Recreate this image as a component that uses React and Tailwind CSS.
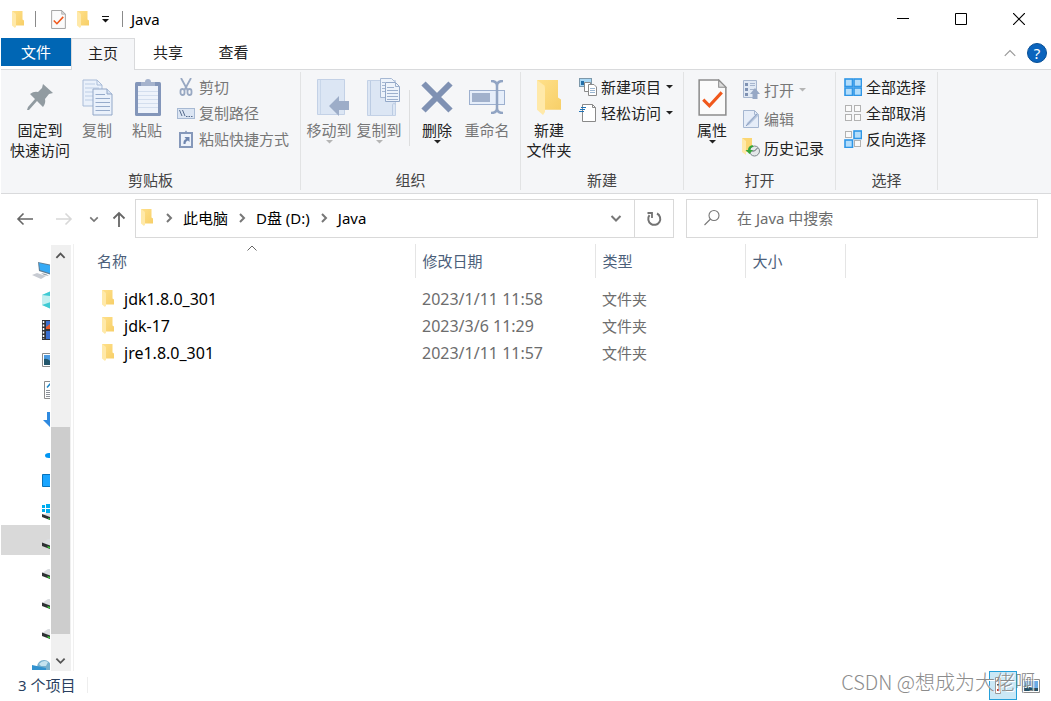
import React from 'react';

const files = [
    { name: 'jdk1.8.0_301', modified: '2023/1/11 11:58', type: '文件夹' },
    { name: 'jdk-17', modified: '2023/3/6 11:29', type: '文件夹' },
    { name: 'jre1.8.0_301', modified: '2023/1/11 11:57', type: '文件夹' },
];

const Folder = ({ className }) => (
    <svg viewBox="0 0 24 34" className={className} preserveAspectRatio="none" aria-hidden="true">
        <defs>
            <linearGradient id="folderBack" x1="0" y1="0" x2="1" y2="1">
                <stop offset="0%" stopColor="#ffe08a" />
                <stop offset="100%" stopColor="#f7cf68" />
            </linearGradient>
        </defs>
        <path d="M0 0H21V17L24 19V29H5Z" fill="url(#folderBack)" />
        <path d="M0 0L7 5Q8 6 8 8V31L6 34L0 29Z" fill="#ffe9a9" />
    </svg>
);

const CheckDoc = ({ className }) => (
    <svg viewBox="0 0 28 36" className={className} aria-hidden="true">
        <path d="M1 1H20L27 8V35H1Z" fill="#fbfbfb" stroke="#8d8d8d" strokeWidth="1.5" />
        <path d="M20 1V8H27Z" fill="#dcdcdc" stroke="#8d8d8d" strokeWidth="1" />
        <path d="M5 20L11 26L23 13" fill="none" stroke="#f0581c" strokeWidth="3" />
    </svg>
);

const Caret = ({ className }) => (
    <svg width="7" height="4" viewBox="0 0 7 4" className={className} aria-hidden="true">
        <path d="M0 0H7L3.500 3.500Z" fill="currentColor" />
    </svg>
);

const Chevron = ({ d, size = 12, stroke = 2, className }) => (
    <svg width={size} height={size} viewBox="0 0 12 12" className={className} aria-hidden="true">
        <path d={d} fill="none" stroke="currentColor" strokeWidth={stroke} />
    </svg>
);

const UP = 'M1.5 8.5L6 4L10.5 8.5';
const DOWN = 'M1.5 4L6 8.5L10.5 4';
const RIGHT = 'M4 2L8 6L4 10';

const PinIcon = () => (
    <svg width="28" height="28" viewBox="0 0 28 28">
        <path d="M17 1L27 10L23 11L19 16Q20 20 17 24L11 18L3 27L1 27L2 24L9 16L4 11Q8 8 12 9L16 5Z" fill="#919ba1" />
    </svg>
);

const Pages = ({ size = 'w-[31px] h-[37px]' }) => (
    <svg viewBox="0 0 31 37" className={size}>
        <path d="M1 1H15L20 6V27H1Z" fill="#eaf1fb" stroke="#a9bcd8" />
        <path d="M15 1V6H20" fill="none" stroke="#a9bcd8" />
        <path d="M3 5H13M3 9H17M3 13H17M3 17H17M3 21H17" stroke="#bccde5" />
        <path d="M11 10H25L30 15V36H11Z" fill="#eaf1fb" stroke="#92a7c8" />
        <path d="M25 10V15H30" fill="#d6e2f3" stroke="#92a7c8" />
        <path d="M13.500 15.500H23M13.500 19.500H28M13.500 23.500H28M13.500 27.500H28M13.500 31.500H28" stroke="#96abcb" />
    </svg>
);

const ClipboardIcon = () => (
    <svg width="27" height="38" viewBox="-1 0 27 38">
        <rect x="0" y="4" width="26" height="34" rx="1.500" fill="#8396ba" />
        <rect x="3" y="8" width="20" height="27" fill="#eef3fb" />
        <path d="M3 13.500H23M3 17.500H23M3 21.500H23M3 25.500H23M3 29.500H23" stroke="#d3deee" />
        <path d="M6 8V4H10Q10 1 13 1T16 4H20V8Z" fill="#a5b3cd" />
    </svg>
);

const ScissorsIcon = () => (
    <svg width="14" height="18" viewBox="0 0 14 18" fill="none" stroke="#98a8c2" strokeWidth="1.800">
        <path d="M2 0L8.500 12M12 0L5.500 12" />
        <rect x="1.500" y="11" width="4" height="6" rx="2" />
        <rect x="8.500" y="11" width="4" height="6" rx="2" />
    </svg>
);

const PathIcon = () => (
    <svg width="18" height="11" viewBox="0 0 18 11">
        <rect x=".5" y=".5" width="17" height="10" fill="#dbe5f3" stroke="#a7b9d3" />
        <path d="M2.500 2L5 8M5.500 2L8 8M9 8.500H10.500M11.500 8.500H13M14 8.500H15.500" stroke="#566c8e" fill="none" />
    </svg>
);

const ShortcutIcon = () => (
    <svg width="14" height="18" viewBox="0 0 14 18">
        <path d="M1 3H13V17H1Z" fill="#edf2fa" stroke="#8598ba" strokeWidth="2" />
        <path d="M4 4V2H6Q7 -1 8 2H10V4Z" fill="#8598ba" />
        <path d="M4.500 14Q4 10 7 9L5.500 7H10.500V12L9 10.500Q6.500 11 6.500 14Z" fill="#6f86af" />
    </svg>
);

const MoveIcon = () => (
    <svg width="40" height="38" viewBox="-8 0 40 38">
        <path d="M.5 1.500H27.500V36.500H.5Z" fill="#dce6f4" stroke="#c3d1e6" />
        <path d="M3.500 2V36" stroke="#c9d7ea" />
        <path d="M12 28L22 18V23H32V32H22V38Z" fill="#9dadc8" />
    </svg>
);

const CopyToIcon = () => (
    <svg width="41" height="39" viewBox="-8 0 41 39">
        <path d="M.5 2.500H28.500V37.500H.5Z" fill="#dce6f4" stroke="#c3d1e6" />
        <path d="M3.500 3V37M25.500 37V27Q27 23 28.500 27" stroke="#bccce3" fill="none" />
        <path d="M13.500 .5H24.500L27.500 3.500V19.500H13.500Z" fill="#edf3fb" stroke="#a6b8d3" />
        <path d="M15 4.500H18M15 7.500H18M15 10.500H18M15 13.500H18" stroke="#a6b8d3" />
        <path d="M18.500 4.500H28.500L32.500 8.500V23.500H18.500Z" fill="#edf3fb" stroke="#93a8c8" />
        <path d="M28.500 4.500V8.500H32M20 9.500H27M20 12.500H31M20 15.500H31M20 18.500H31M20 21.500H31" stroke="#9db0cd" fill="none" />
    </svg>
);

const DeleteIcon = () => (
    <svg width="32" height="32" viewBox="0 0 32 32">
        <path d="M2.500 2.500L29.500 29.500M29.500 2.500L2.500 29.500" stroke="#7f91b3" strokeWidth="6" />
    </svg>
);

const RenameIcon = () => (
    <svg width="36" height="34" viewBox="0 0 36 34">
        <rect x=".5" y="10.500" width="35" height="14" fill="#e6eefa" stroke="#9db0cf" />
        <rect x="3" y="13" width="18" height="9" fill="#a1b1cc" />
        <path d="M22 1Q28 1 28 6Q28 1 34 1M28 4V30M22 33Q28 33 28 28Q28 33 34 33" fill="none" stroke="#91a4c3" strokeWidth="2.500" />
    </svg>
);

const NewItemIcon = () => (
    <svg width="18" height="18" viewBox="0 0 18 18">
        <rect x=".5" y=".5" width="12" height="8" fill="#a9d8f5" stroke="#7d98aa" />
        <rect x="2" y="3" width="3" height="4" fill="#246fa8" />
        <path d="M5.500 4.500H11.500V13.500H5.500Z" fill="#fff" stroke="#8b8b8b" />
        <path d="M9.500 6.500H15L17.500 9V17.500H9.500Z" fill="#fff" stroke="#8b8b8b" />
        <path d="M11 10.500H16M11 12.500H16M11 14.500H16" stroke="#9bb6d1" />
    </svg>
);

const EasyAccessIcon = () => (
    <svg width="18" height="18" viewBox="0 0 18 18">
        <path d="M3.500 .5H13.500L16.500 3.500V17.500H3.500Z" fill="#fff" stroke="#898989" />
        <path d="M13.500 .5V3.500H16.500" fill="none" stroke="#898989" />
        <path d="M2 3.500H7M1 5.500H6M0 7.500H5" stroke="#1f73b7" />
    </svg>
);

const OpenIcon = () => (
    <svg width="17" height="19" viewBox="0 0 17 19">
        <path d="M.5 .5H13.500V17.500H.5Z" fill="#e1e9f4" stroke="#a7b6ce" />
        <path d="M2 3H5V6H2ZM2 8H5V11H2ZM2 13H5V16H2Z" fill="#7f92b3" />
        <path d="M7 3.500H12M7 5.500H12M7 9.500H12" stroke="#a7b6ce" />
        <path d="M12 8L17 14H14.500V19H9.500V14H7Z" fill="#97a8c5" />
    </svg>
);

const EditIcon = () => (
    <svg width="17" height="18" viewBox="0 0 17 18">
        <path d="M.5 .5H11.500L15.500 4.500V17.500H.5Z" fill="#e6edf8" stroke="#a5b6d0" />
        <path d="M11.500 .5V4.500H15.500" fill="none" stroke="#a5b6d0" />
        <path d="M4 13L14 3L16 5L6 15L3 16Z" fill="#b8c7de" />
        <path d="M3 16L14 4" stroke="#8da1c2" />
    </svg>
);

const HistoryIcon = () => (
    <svg width="18" height="19" viewBox="0 0 18 19">
        <path d="M0 0H10V14H4Z" fill="#fbd673" />
        <path d="M0 0L4 3V17L0 14Z" fill="#ffe9a9" />
        <circle cx="12.500" cy="13" r="5" fill="#e4e8e9" stroke="#7b8589" />
        <path d="M12.500 13L15.500 10M12.500 13H10" stroke="#59636a" />
        <path d="M10.500 7Q6 8 6 12H3.500L7.500 16L11 12H8.500Q8.500 9 11.500 9Z" fill="#35a53b" />
    </svg>
);

const SelectIcon = ({ on }) => (
    <svg width="18" height="18" viewBox="0 0 18 18">
        {[[0, 0], [9, 0], [0, 9], [9, 9]].map(([x, y], i) => {
            const active = on.includes(i);
            return (
                <rect
                    key={i}
                    x={x + (active ? 1 : 1.5)}
                    y={y + (active ? 1 : 1.5)}
                    width={active ? 7.5 : 6}
                    height={active ? 7.5 : 6}
                    fill={active ? '#b3ddfb' : '#fafafa'}
                    stroke={active ? '#2f96e6' : '#b2b2b2'}
                    strokeWidth={active ? 1.6 : 1}
                />
            );
        })}
    </svg>
);

const BigButton = ({ icon, label, caret, disabled, width = 'w-[50px]' }) => (
    <button className={`${width} flex flex-col items-center shrink-0 ${disabled ? 'text-[#777]' : 'text-[#222]'}`}>
        <span className="h-[46px] flex items-center justify-center">{icon}</span>
        <span className="leading-5 whitespace-pre">{label}</span>
        {caret && <Caret className={disabled ? 'text-[#b5b5b5]' : 'text-[#222]'} />}
    </button>
);

const SmallButton = ({ icon, label, caret, disabled, height = 'h-[26px]' }) => (
    <button className={`${height} flex items-center whitespace-nowrap ${disabled ? 'text-[#777]' : 'text-[#222]'}`}>
        <span className="w-[18px] mr-1 flex justify-center">{icon}</span>
        {label}
        {caret && <Caret className={disabled ? 'ml-[5px] text-[#b5b5b5]' : 'ml-[5px] text-[#222]'} />}
    </button>
);

const Group = ({ label, width, children }) => (
    <section className={`${width} shrink-0 mt-0.5 mb-[3px] flex flex-col border-r border-[#e2e3e4]`}>
        <div className="flex-1 flex items-start">{children}</div>
        <div className="h-5 leading-5 text-center text-[#444]">{label}</div>
    </section>
);

const Ribbon = () => (
    <div className="h-[124px] shrink-0 ml-px flex bg-[#f5f6f8] border-b border-[#d9dadc] overflow-hidden">
        <Group label="剪贴板" width="w-[300px]">
            <div className="pl-[7px] pt-0.5 flex">
                <BigButton icon={<PinIcon />} label={'固定到\n快速访问'} width="w-16" />
                <BigButton icon={<Pages />} label="复制" disabled />
                <BigButton icon={<ClipboardIcon />} label="粘贴" disabled />
            </div>
            <div className="pl-[5px] pt-0.5 flex flex-col items-start">
                <SmallButton icon={<ScissorsIcon />} label="剪切" disabled />
                <SmallButton icon={<PathIcon />} label="复制路径" disabled />
                <SmallButton icon={<ShortcutIcon />} label="粘贴快捷方式" disabled />
            </div>
        </Group>
        <Group label="组织" width="w-[220px]">
            <div className="pl-[3px] pt-0.5 flex">
                <BigButton icon={<MoveIcon />} label="移动到" caret disabled />
                <BigButton icon={<CopyToIcon />} label="复制到" caret disabled />
                <div className="w-px h-14 mt-4 ml-[5px] mr-0.5 bg-[#dddedf]" />
                <BigButton icon={<DeleteIcon />} label="删除" caret />
                <BigButton icon={<RenameIcon />} label="重命名" disabled />
            </div>
        </Group>
        <Group label="新建" width="w-[163px]">
            <div className="pl-[3px] pt-0.5 flex">
                <BigButton icon={<Folder className="w-6 h-[35px]" />} label={'新建\n文件夹'} />
            </div>
            <div className="pl-[5px] pt-0.5 flex flex-col items-start">
                <SmallButton icon={<NewItemIcon />} label="新建项目" caret />
                <SmallButton icon={<EasyAccessIcon />} label="轻松访问" caret />
            </div>
        </Group>
        <Group label="打开" width="w-[152px]">
            <div className="pl-[3px] pt-0.5 flex">
                <BigButton icon={<CheckDoc className="w-[29px] h-[37px]" />} label="属性" caret />
            </div>
            <div className="pl-[5px] pt-[3px] flex flex-col items-start">
                <SmallButton icon={<OpenIcon />} label="打开" caret disabled height="h-[29px]" />
                <SmallButton icon={<EditIcon />} label="编辑" disabled height="h-[29px]" />
                <SmallButton icon={<HistoryIcon />} label="历史记录" height="h-[29px]" />
            </div>
        </Group>
        <Group label="选择" width="w-[102px]">
            <div className="pl-2 pt-0.5 flex flex-col items-start">
                <SmallButton icon={<SelectIcon on={[0, 1, 2, 3]} />} label="全部选择" />
                <SmallButton icon={<SelectIcon on={[]} />} label="全部取消" />
                <SmallButton icon={<SelectIcon on={[1, 2]} />} label="反向选择" />
            </div>
        </Group>
    </div>
);

const TitleBar = () => (
    <header className="h-[38px] shrink-0 flex items-center justify-between">
        <div className="flex items-center pl-3">
            <Folder className="w-3 h-[17px]" />
            <span className="w-px h-4 ml-[11px] mr-[15px] bg-[#8a8a8a]" />
            <button aria-label="属性"><CheckDoc className="w-[15px] h-[19px]" /></button>
            <button aria-label="新建文件夹" className="ml-[11px]"><Folder className="w-3 h-[17px]" /></button>
            <button aria-label="自定义快速访问工具栏" className="ml-[13px]">
                <svg width="7" height="7" viewBox="0 0 7 7"><path d="M0 .5H7" stroke="#111" /><path d="M0 3H7L3.500 6.500Z" fill="#111" /></svg>
            </button>
            <span className="w-px h-4 ml-[13px] mr-2 bg-[#8a8a8a]" />
            <h1>Java</h1>
        </div>
        <div className="flex h-full pr-[3px]">
            <button aria-label="最小化" className="w-[58px] flex items-center justify-center">
                <svg width="12" height="12" viewBox="0 0 12 12"><path d="M0 5.500H12" stroke="#000" /></svg>
            </button>
            <button aria-label="最大化" className="w-[58px] flex items-center justify-center">
                <svg width="12" height="12" viewBox="0 0 12 12"><path d="M.5 .5H11.500V11.500H.5Z" fill="none" stroke="#000" /></svg>
            </button>
            <button aria-label="关闭" className="w-[58px] flex items-center justify-center">
                <svg width="12" height="12" viewBox="0 0 12 12"><path d="M0 0L12 12M12 0L0 12" stroke="#000" strokeWidth="1.200" /></svg>
            </button>
        </div>
    </header>
);

const Tabs = () => (
    <nav className="h-8 shrink-0 ml-px flex items-start border-b border-[#d9dadc] text-[#222]">
        <button className="w-[70px] h-7 bg-[#0066b4] text-white">文件</button>
        <button className="w-16 h-8 pb-1 bg-[#f5f6f8] border border-b-0 border-[#d9dadc]">主页</button>
        <button className="w-[66px] h-7">共享</button>
        <button className="w-[65px] h-7">查看</button>
        <div className="ml-auto h-[30px] pr-1 flex items-center gap-2.5">
            <button aria-label="最小化功能区"><Chevron d={UP} size={14} stroke={1} className="text-[#999]" /></button>
            <button className="w-5 h-5 rounded-full bg-[#0b64bd] border border-[#084f95] text-white leading-none">?</button>
        </div>
    </nav>
);

const AddressBar = () => (
    <div className="h-[50px] shrink-0 pt-[5px] pr-[13px] flex items-start text-black">
        <div className="w-[135px] h-[39px] shrink-0 pl-4 pr-[9px] flex items-center justify-between text-[#777]">
            <button aria-label="后退">
                <svg width="18" height="14" viewBox="0 0 18 14" fill="none" stroke="#666" strokeWidth="1.600"><path d="M17 7H2M7.500 1.500L2 7L7.500 12.500" /></svg>
            </button>
            <button aria-label="前进" className="ml-5">
                <svg width="18" height="14" viewBox="0 0 18 14" fill="none" stroke="#d8d8d8" strokeWidth="1.600"><path d="M1 7H16M10.500 1.500L16 7L10.500 12.500" /></svg>
            </button>
            <button aria-label="最近位置" className="ml-4"><Chevron d={DOWN} size={10} /></button>
            <button aria-label="上移" className="ml-3">
                <svg width="14" height="16" viewBox="0 0 14 16" fill="none" stroke="#666" strokeWidth="1.800"><path d="M7 16V2M1.500 7.500L7 2L12.500 7.500" /></svg>
            </button>
        </div>
        <div className="h-[39px] flex-1 flex border border-[#d9d9d9]">
            <div className="flex-1 flex items-center pl-[5px] pb-0.5">
                <Folder className="w-3 h-[17px] mr-2.5" />
                <Chevron d={RIGHT} className="text-[#777]" />
                <button className="mx-2">此电脑</button>
                <Chevron d={RIGHT} className="text-[#777]" />
                <button className="mx-2">D盘 (D:)</button>
                <Chevron d={RIGHT} className="text-[#777]" />
                <button className="mx-2">Java</button>
                <button aria-label="上一个位置" className="ml-auto mr-3"><Chevron d={DOWN} className="text-[#777]" /></button>
            </div>
            <button aria-label="刷新" className="w-[39px] border-l border-[#d9d9d9] flex items-center justify-center">
                <svg width="16" height="16" viewBox="0 0 16 16" fill="none" stroke="#737373" strokeWidth="2">
                    <path d="M11 2.500A6 6 0 1 1 3.500 4.200" />
                    <path d="M1.500 2H6V7" strokeWidth="1.800" />
                </svg>
            </button>
        </div>
        <label className="w-[352px] h-[39px] ml-3 pl-4 pb-px flex items-center border border-[#d9d9d9]">
            <svg width="18" height="18" viewBox="0 0 18 18" fill="none" stroke="#777" strokeWidth="1.100">
                <circle cx="11" cy="6.500" r="5" />
                <path d="M7.500 10L1.500 16" />
            </svg>
            <input
                type="text"
                aria-label="搜索"
                placeholder="在 Java 中搜索"
                className="min-w-0 flex-1 ml-4 outline-none placeholder:text-[#6d6d6d]"
            />
        </label>
    </div>
);

const Drive = () => (
    <svg width="18" height="18" viewBox="0 0 18 18">
        <path d="M0 12L6 8H18V16L8 18Z" fill="#dcdee2" />
        <path d="M0 11.500L8 14.500V18L0 15Z" fill="#2d3033" />
        <path d="M5.500 15L8 16V17.500L5.500 16.500Z" fill="#34d134" />
    </svg>
);

const sideItems = [
    { label: '此电脑', root: true, icon: (
        <svg width="20" height="20" viewBox="0 0 20 20">
            <path d="M6 2L20 5V15L7 11Z" fill="#5f7d94" />
            <path d="M7 3L20 6V14L8 10Z" fill="#35aaf6" />
            <path d="M0 15L5 13L14 16L9 19Z" fill="#c7cbd2" />
            <path d="M9 13L14 14L17 16L12 15Z" fill="#9aa4ad" />
        </svg>
    ) },
    { label: '3D 对象', icon: (
        <svg width="18" height="18" viewBox="0 0 18 18">
            <path d="M0 4L9 0L18 4V14L9 18L0 14Z" fill="#c4f0f1" />
            <path d="M0 4L9 0V5ZM0 14L9 11V18Z" fill="#3fcad3" />
        </svg>
    ) },
    { label: '视频', icon: (
        <svg width="18" height="20" viewBox="0 0 18 20">
            <path d="M0 0H18V20H0Z" fill="#33343a" />
            <path d="M1.500 1V19" stroke="#fff" strokeWidth="1.500" strokeDasharray="2 1.500" />
            <path d="M4 1H18V9H4ZM4 11H18V19H4Z" fill="#3a6fd0" />
            <path d="M4 7L8 4L10 9H4Z" fill="#e75b2c" />
        </svg>
    ) },
    { label: '图片', icon: (
        <svg width="18" height="14" viewBox="0 0 18 14">
            <path d="M.5 .5H17.500V13.500H.5Z" fill="#fff" stroke="#8c8c8c" />
            <path d="M2 2H16V12H2Z" fill="#4d9be0" />
            <path d="M2 6Q6 5 9 9H16V12H2Z" fill="#23566b" />
        </svg>
    ) },
    { label: '文档', icon: (
        <svg width="18" height="18" viewBox="0 0 18 18">
            <path d="M2.500 .5H16.500V17.500H2.500Z" fill="#fff" stroke="#8c8c8c" />
            <path d="M5 6.500L8 3H13" stroke="#1c87c9" strokeWidth="1.500" fill="none" />
            <path d="M4 9.500H15M4 11.500H15M4 13.500H15M4 15.500H15" stroke="#8c9299" />
        </svg>
    ) },
    { label: '下载', icon: (
        <svg width="18" height="16" viewBox="0 0 18 16"><path d="M5 0H12V8H18L9 16L1 8H5Z" fill="#2f8ae0" /></svg>
    ) },
    { label: '音乐', icon: (
        <svg width="18" height="18" viewBox="0 0 18 18"><path d="M9 3H11V14H9Z" fill="#0095f2" /><ellipse cx="7" cy="14.500" rx="4" ry="2.500" fill="#0095f2" /></svg>
    ) },
    { label: '桌面', icon: (
        <svg width="18" height="13" viewBox="0 0 18 13"><path d="M.5 .5H17.500V12.500H.5Z" fill="#1aa5ff" stroke="#0873bb" /></svg>
    ) },
    { label: '本地磁盘 (C:)', icon: (
        <svg width="18" height="22" viewBox="0 0 18 22">
            <path d="M0 6H3V9H0ZM4 5H8V9H4ZM0 10H3V13H0ZM4 10H8V14H4Z" fill="#00adef" />
            <path d="M0 16L5 14L18 15V19L8 21Z" fill="#dcdee2" />
            <path d="M0 15L8 18V21L0 18Z" fill="#2d3033" />
            <path d="M6 19L8 19.500V20.500L6 20Z" fill="#34d134" />
        </svg>
    ) },
    { label: 'D盘 (D:)', selected: true, icon: <Drive /> },
    { label: 'E盘 (E:)', icon: <Drive /> },
    { label: 'F盘 (F:)', icon: <Drive /> },
    { label: 'G盘 (G:)', icon: <Drive /> },
    { label: '网络', root: true, icon: (
        <svg width="20" height="20" viewBox="0 0 20 20">
            <circle cx="12" cy="17" r="7" fill="#77b0cd" />
            <path d="M7 14Q11 9 16 12L14 16H9Z" fill="#c5e3ef" />
            <path d="M0 15L14 18V20H0Z" fill="#3292cf" />
        </svg>
    ) },
];

const Sidebar = () => (
    <aside className="w-[74px] shrink-0 flex border-r border-[#f0f0f0] overflow-hidden">
        <nav className="w-[50px] h-full pl-px pt-[11px] overflow-hidden">
            {sideItems.map((item) => (
                <button
                    key={item.label}
                    aria-label={item.label}
                    className={`w-full h-[30px] flex items-center ${item.root ? 'pl-[31px]' : 'pl-[41px]'} ${item.selected ? 'bg-[#d9d9d9]' : ''}`}
                >
                    <span className="shrink-0">{item.icon}</span>
                </button>
            ))}
        </nav>
        <div className="w-5 ml-px mt-px flex flex-col bg-[#f0f0f0] text-[#555]">
            <button aria-label="向上滚动" className="w-[19px] h-5 flex items-center justify-center"><Chevron d={UP} size={11} /></button>
            <div className="flex-[162]" />
            <div className="flex-[207] w-[19px] bg-[#cdcdcd]" />
            <div className="flex-[16]" />
            <button aria-label="向下滚动" className="w-[19px] h-[21px] flex items-center justify-center"><Chevron d={DOWN} size={11} /></button>
        </div>
    </aside>
);

const FileTable = () => (
    <main className="flex-1 min-w-0 overflow-hidden">
        <table className="w-[771px] table-fixed border-collapse text-left text-[#6d6d6d]">
            <colgroup>
                <col className="w-[341px]" />
                <col className="w-[180px]" />
                <col className="w-[150px]" />
                <col className="w-[100px]" />
            </colgroup>
            <thead>
                <tr className="h-[34px] text-[#4c607a]">
                    <th className="relative pl-[23px] font-normal border-r border-[#e5e5e5]">
                        名称
                        <Chevron d={UP} size={12} stroke={1} className="absolute left-[172px] -top-0.5 text-[#666]" />
                    </th>
                    <th className="pl-[7px] font-normal border-r border-[#e5e5e5]">修改日期</th>
                    <th className="pl-[7px] font-normal border-r border-[#e5e5e5]">类型</th>
                    <th className="pl-[7px] font-normal border-r border-[#e5e5e5]">大小</th>
                </tr>
            </thead>
            <tbody>
                <tr className="h-[7px]"><td colSpan={4} /></tr>
                {files.map((file) => (
                    <tr key={file.name} className="h-[27px]">
                        <td className="pl-7 py-0 text-base leading-5 text-black">
                            <div className="flex items-center gap-2.5">
                                <Folder className="w-3 h-[17px]" />
                                {file.name}
                            </div>
                        </td>
                        <td className="pl-[7px] py-0 text-base leading-5">{file.modified}</td>
                        <td className="pl-[7px] py-0">{file.type}</td>
                        <td />
                    </tr>
                ))}
            </tbody>
        </table>
    </main>
);

const StatusBar = () => (
    <footer className="relative h-[30px] shrink-0 flex items-start justify-between pl-[18px] pr-[7px] text-[#2a3f5f]">
        <span className="mt-1.5 pr-3 leading-4 border-r border-[#eee]">3 个项目</span>
        <div className="flex items-center">
            <button aria-label="详细信息" className="w-7 h-[29px] flex items-center justify-center bg-[#cbe8f6] border border-[#26a0da]">
                <svg width="16" height="17" viewBox="0 0 16 17">
                    <path d="M.5 .5H5.500V16.500H.5Z" fill="#fff" stroke="#999" />
                    <path d="M3 3V4.500M3 7V8.500" stroke="#555" strokeWidth="2" />
                    <path d="M3 12V14" stroke="#d13c25" strokeWidth="2" />
                    <path d="M7 3.500H15M7 8.500H15M7 13.500H15" stroke="#999" />
                </svg>
            </button>
            <button aria-label="大图标" className="w-[27px] flex items-center justify-center">
                <svg width="18" height="14" viewBox="0 0 18 14">
                    <path d="M.5 .5H17.500V13.500H.5Z" fill="#fff" stroke="#8c8c8c" />
                    <path d="M2 2H16V12H2Z" fill="#69ace6" />
                    <path d="M2 7Q6 5 9 9H16V12H2Z" fill="#245066" />
                </svg>
            </button>
        </div>
        <div className="absolute right-4 -top-1 leading-[30px] text-xl font-light text-[#8c8c8c] whitespace-nowrap font-[family-name:'Noto_Sans_CJK_SC',sans-serif] [text-shadow:1px_1px_0_white]">
            CSDN @想成为大佬啊
        </div>
    </footer>
);

const App = () => (
    <div className="h-screen flex flex-col overflow-hidden bg-white text-[15px] leading-5 text-black font-[family-name:'Noto_Sans','Noto_Sans_CJK_SC',sans-serif]">
        <TitleBar />
        <Tabs />
        <Ribbon />
        <AddressBar />
        <div className="flex-1 min-h-0 flex">
            <Sidebar />
            <FileTable />
        </div>
        <StatusBar />
    </div>
);

export default App;
